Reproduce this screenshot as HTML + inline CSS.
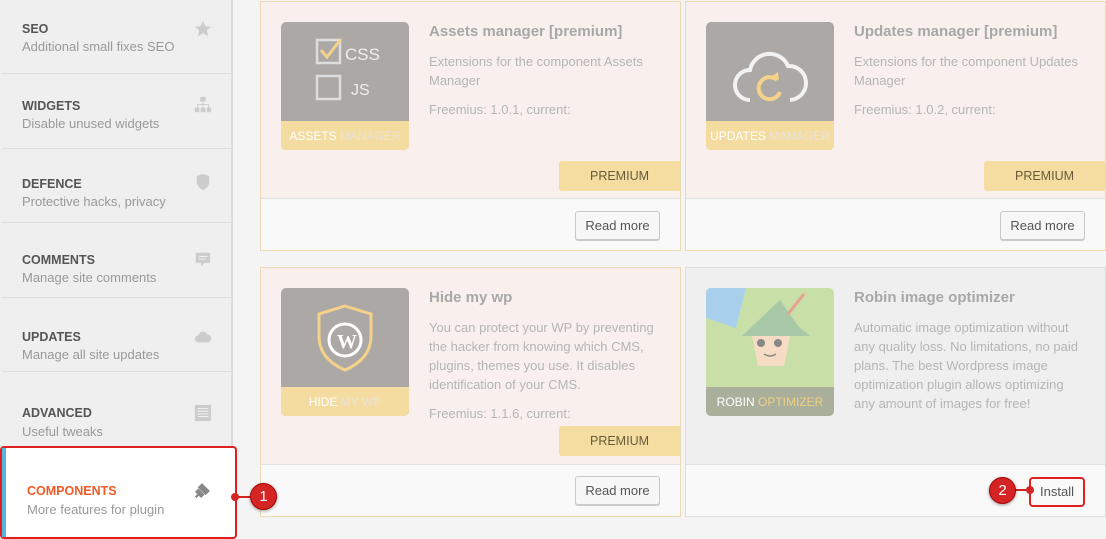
<!DOCTYPE html><html><head><style>
*{box-sizing:border-box;margin:0;padding:0}
body{width:1106px;height:539px;overflow:hidden;background:#f4f4f4;font-family:"Liberation Sans",sans-serif;position:relative}
.sb{position:absolute;left:0;top:0;width:233px;height:539px;background:#efefef;border-right:2px solid #dcdcdc}
.it{position:absolute;left:2px;width:229px;border-bottom:1px solid #dedede}
.it b{position:absolute;left:20px;font-size:12.5px;color:#555;font-weight:bold}
.it span{position:absolute;left:20px;font-size:13px;color:#999}
.ic{position:absolute;left:192px;width:18px;height:18px}
.card{position:absolute;width:421px;height:250px;border:1px solid #ecdab4;background:#f9f0ed}
.card .ft{position:absolute;left:0;right:0;bottom:0;height:52px;background:#f9f9f9;border-top:1px solid #e2e2e2}
.img{position:absolute;left:20px;top:20px;width:128px;height:128px;border-radius:5px;background:#aca8a6;overflow:hidden}
.img .band{position:absolute;left:0;right:0;bottom:0;height:29px;background:#f4dca0;color:#fff;font-size:12px;text-align:center;line-height:30px;white-space:nowrap}
.t{position:absolute;left:168px;top:21px;font-size:15px;font-weight:bold;color:#a8a8a8}
.d{position:absolute;left:168px;top:50px;width:240px;font-size:13px;line-height:19px;color:#b5b5b5}
.prem{position:absolute;right:0;top:159px;width:121px;height:30px;background:#f5dca0;border-radius:3px 0 0 3px;font-size:12.5px;color:#6a5a3a;text-align:center;line-height:30px}
.btn{position:absolute;right:20px;top:209px;width:85px;height:29px;border:1px solid #c9c9c9;border-radius:3px;background:#f7f7f7;font-size:13px;color:#555;text-align:center;line-height:27px;box-shadow:0 1px 0 #ccc}
.num{position:absolute;z-index:5;width:27px;height:27px;border-radius:50%;background:#d42424;border:1px solid #a00;color:#fff;font-size:15px;text-align:center;line-height:26px;box-shadow:0 1px 3px rgba(0,0,0,.4)}
</style></head><body>
<div class="sb">
<div class="it" style="top:0;height:74px"><b style="top:22px">SEO</b><span style="top:39px">Additional small fixes SEO</span><svg class="ic" style="top:20px" viewBox="0 0 20 20"><path d="M10 1l2.7 6 6.3.5-4.8 4.2 1.5 6.3L10 14.6 4.3 18l1.5-6.3L1 7.5l6.3-.5z" fill="#ccc"/></svg></div>
<div class="it" style="top:74px;height:75px"><b style="top:25px">WIDGETS</b><span style="top:42px">Disable unused widgets</span><svg class="ic" style="top:22px" viewBox="0 0 20 20" fill="#ccc"><rect x="7" y="1" width="6" height="5"/><rect x="1" y="13" width="5" height="5"/><rect x="7.5" y="13" width="5" height="5"/><rect x="14" y="13" width="5" height="5"/><path d="M9.5 6h1v3h6v4h-1v-3h-5v3h-1v-3h-5v3h-1V9h6z"/></svg></div>
<div class="it" style="top:149px;height:74px"><b style="top:28px">DEFENCE</b><span style="top:45px">Protective hacks, privacy</span><svg class="ic" style="top:24px" viewBox="0 0 20 20"><path d="M10 1l7 2.5v6C17 14 14 17 10 19 6 17 3 14 3 9.5v-6z" fill="#ccc"/></svg></div>
<div class="it" style="top:223px;height:75px"><b style="top:30px">COMMENTS</b><span style="top:47px">Manage site comments</span><svg class="ic" style="top:28px" viewBox="0 0 20 20"><path d="M2 2h16v11h-6l-4 4v-4H2z" fill="#ccc"/><path d="M5 6h10M5 9h8" stroke="#efefef" stroke-width="1.3"/></svg></div>
<div class="it" style="top:298px;height:74px"><b style="top:32px">UPDATES</b><span style="top:49px">Manage all site updates</span><svg class="ic" style="top:30px" viewBox="0 0 20 20"><path d="M5 16a4 4 0 010-8 5 5 0 019.5-1A4.5 4.5 0 0115 16z" fill="#ccc"/></svg></div>
<div class="it" style="top:372px;height:74px;border:none"><b style="top:34px">ADVANCED</b><span style="top:52px">Useful tweaks</span><svg class="ic" style="top:32px" viewBox="0 0 20 20"><rect x="1" y="1" width="18" height="18" fill="#ccc"/><path d="M4 5h12M4 8h12M4 11h12M4 14h12" stroke="#efefef" stroke-width="1.2"/></svg></div>
</div>
<div style="position:absolute;left:0;top:446px;width:237px;height:93px;background:#fff;border:2px solid #e02020;border-radius:4px"></div>
<div style="position:absolute;left:2px;top:448px;width:4px;height:89px;background:#5ab4dc"></div>
<div style="position:absolute;left:27px;top:484px;font-size:12.5px;font-weight:bold;color:#f25a25">COMPONENTS</div>
<div style="position:absolute;left:27px;top:502px;font-size:13px;color:#999">More features for plugin</div>
<svg style="position:absolute;left:193px;top:482px" width="18" height="18" viewBox="0 0 20 20"><path d="M3 17l3-3M6 9l5 5-2 2-5-5zM11 5l4 4M10 3l-3 3 7 7 3-3z" stroke="#888" stroke-width="2.5" fill="#888"/></svg>

<div class="card" style="left:260px;top:1px"><div class="ft"></div>
<div class="img"><svg width="128" height="100" viewBox="0 0 128 100"><rect x="36" y="18" width="23" height="23" fill="none" stroke="#ddd" stroke-width="2.5"/><path d="M40 28l6 7 14-18" stroke="#f4d28a" stroke-width="3" fill="none"/><text x="64" y="38" font-size="17" fill="#eee" font-family="Liberation Sans">CSS</text><rect x="36" y="54" width="23" height="23" fill="none" stroke="#ddd" stroke-width="2.5"/><text x="70" y="73" font-size="16" fill="#eee" font-family="Liberation Sans">JS</text></svg><div class="band">ASSETS <span style="color:#e8e3d8">MANAGER</span></div></div>
<div class="t">Assets manager [premium]</div><div class="d">Extensions for the component Assets Manager<br><div style="margin-top:10px">Freemius: 1.0.1, current:</div></div>
<div class="prem">PREMIUM</div><div class="btn">Read more</div></div>

<div class="card" style="left:685px;top:1px"><div class="ft"></div>
<div class="img"><svg width="128" height="100" viewBox="0 0 128 100"><path d="M44 78a15 15 0 010-30 20 20 0 0138-4 16 16 0 012 34" fill="none" stroke="#f2f2f2" stroke-width="4"/><path d="M74 70a11 11 0 11-3-12" fill="none" stroke="#f4d28a" stroke-width="4"/><path d="M66 54l7 4-1-8z" fill="#f4d28a"/></svg><div class="band">UPDATES <span style="color:#e8e3d8">MANAGER</span></div></div>
<div class="t">Updates manager [premium]</div><div class="d">Extensions for the component Updates Manager<br><div style="margin-top:10px">Freemius: 1.0.2, current:</div></div>
<div class="prem">PREMIUM</div><div class="btn">Read more</div></div>

<div class="card" style="left:260px;top:267px"><div class="ft"></div>
<div class="img"><svg width="128" height="100" viewBox="0 0 128 100"><path d="M64 18l26 8v22c0 18-12 28-26 34-14-6-26-16-26-34V26z" fill="none" stroke="#f4d28a" stroke-width="3"/><circle cx="64" cy="52" r="16" fill="none" stroke="#fff" stroke-width="3"/><text x="56" y="60" font-size="20" font-weight="bold" fill="#fff" font-family="Liberation Serif">W</text></svg><div class="band">HIDE <span style="color:#e8e3d8">MY WP</span></div></div>
<div class="t">Hide my wp</div><div class="d">You can protect your WP by preventing the hacker from knowing which CMS, plugins, themes you use. It disables identification of your CMS.<br><div style="margin-top:10px">Freemius: 1.1.6, current:</div></div>
<div class="prem" style="top:158px">PREMIUM</div><div class="btn" style="top:208px">Read more</div></div>

<div class="card" style="left:685px;top:267px;background:#efefef;border-color:#dedede"><div class="ft"></div>
<div class="img" style="background:#c8dfa8"><svg width="128" height="100" viewBox="0 0 128 100"><path d="M0 0h40l-10 40L0 30z" fill="#a8d0ec"/><path d="M36 48h68l-12-10-18-26z" fill="#a8c8a8"/><path d="M46 48h38l-6 30H52z" fill="#f6dcc4"/><circle cx="55" cy="55" r="4" fill="#888"/><circle cx="72" cy="55" r="4" fill="#888"/><path d="M58 66q6 4 12 0" stroke="#888" stroke-width="1.5" fill="none"/><path d="M82 26l16-20" stroke="#e8a090" stroke-width="3"/></svg><div class="band" style="background:#aaaf9c">ROBIN <span style="color:#f0d080">OPTIMIZER</span></div></div>
<div class="t">Robin image optimizer</div><div class="d" style="width:232px">Automatic image optimization without any quality loss. No limitations, no paid plans. The best Wordpress image optimization plugin allows optimizing any amount of images for free!</div>
<div style="position:absolute;right:20px;top:209px;width:56px;height:30px;border:2px solid #e02020;border-radius:4px;background:#f9f9f9;font-size:13px;color:#555;text-align:center;line-height:26px">Install</div></div>

<div style="position:absolute;z-index:4;left:235px;top:496px;width:20px;height:2px;background:#d42424"></div>
<div style="position:absolute;z-index:4;left:231px;top:493px;width:8px;height:8px;border-radius:50%;background:#d42424"></div>
<div class="num" style="left:250px;top:483px">1</div>
<div style="position:absolute;z-index:4;left:1012px;top:489px;width:20px;height:2px;background:#d42424"></div>
<div style="position:absolute;z-index:4;left:1026px;top:486px;width:8px;height:8px;border-radius:50%;background:#d42424"></div>
<div class="num" style="left:989px;top:477px">2</div>
</body></html>
